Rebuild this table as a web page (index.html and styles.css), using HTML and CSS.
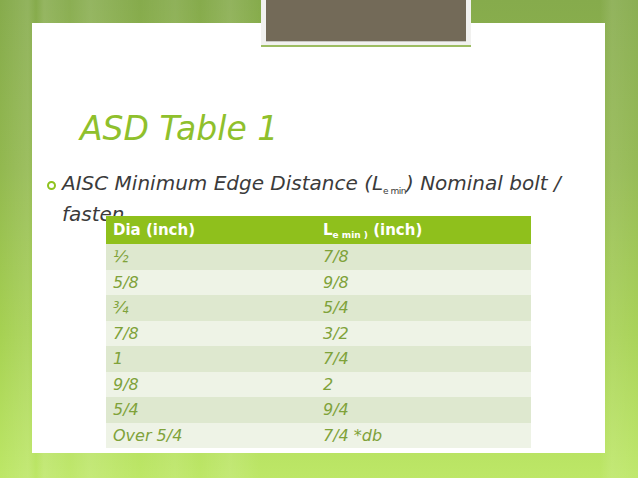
FILE: index.html
```html
<!DOCTYPE html>
<html>
<head>
<meta charset="utf-8">
<link rel="stylesheet" href="styles.css">
</head>
<body>
<div class="slide">
  <div class="photo-frame"><div class="photo"></div></div>
  <div class="panel">
    <h1 class="title">ASD Table 1</h1>
    <div class="bullet">
      <span class="dot"></span>
      <p class="bullet-text">AISC Minimum Edge Distance (L<sub class="sub">e min</sub>) Nominal bolt / fasten</p>
    </div>
    <table class="tbl">
      <thead>
        <tr><th class="c1">Dia (inch)</th><th class="c2">L<sub class="hsub">e min )</sub> (inch)</th></tr>
      </thead>
      <tbody>
        <tr><td>½</td><td>7/8</td></tr>
        <tr><td>5/8</td><td>9/8</td></tr>
        <tr><td>¾</td><td>5/4</td></tr>
        <tr><td>7/8</td><td>3/2</td></tr>
        <tr><td>1</td><td>7/4</td></tr>
        <tr><td>9/8</td><td>2</td></tr>
        <tr><td>5/4</td><td>9/4</td></tr>
        <tr><td>Over 5/4</td><td>7/4 *db</td></tr>
      </tbody>
    </table>
  </div>
</div>
</body>
</html>
```
FILE: styles.css
```css
html, body {
  margin: 0;
  padding: 0;
}
body {
  width: 638px;
  height: 478px;
  overflow: hidden;
}
.slide {
  position: relative;
  width: 638px;
  height: 478px;
  box-sizing: border-box;
  padding: 23px 33px 25px 32px;
  background:
    linear-gradient(90deg,
      rgba(255,255,255,0) 0px, rgba(255,255,255,0.10) 28px, rgba(255,255,255,0.0) 36px,
      rgba(255,255,255,0.12) 44px, rgba(255,255,255,0.04) 70px, rgba(255,255,255,0.12) 90px,
      rgba(255,255,255,0) 140px, rgba(255,255,255,0.08) 175px, rgba(255,255,255,0) 200px,
      rgba(255,255,255,0.10) 230px, rgba(255,255,255,0) 260px,
      rgba(255,255,255,0) 600px, rgba(255,255,255,0.10) 612px, rgba(255,255,255,0.04) 638px),
    linear-gradient(180deg, #86ab4c 0%, #92b84f 35%, #a6d152 70%, #bde767 100%);
}
.photo-frame {
  position: absolute;
  left: 261px;
  top: 0;
  width: 210px;
  height: 45px;
  background: #f1f1ef;
  border-bottom: 2px solid #9dbd62;
  box-sizing: content-box;
}
.photo {
  margin: 0 5px;
  height: 41px;
  background: #736a58;
  border-bottom: 1px solid #c9c7c2;
}
.panel {
  height: 430px;
  background: #ffffff;
  box-sizing: border-box;
  padding-top: 1px;
}
.title {
  margin: 85px 0 0 48px;
  font-family: "DejaVu Sans", sans-serif;
  font-style: italic;
  font-weight: normal;
  font-size: 33px;
  line-height: 40px;
  color: #8fc02c;
}
.bullet {
  display: flex;
  align-items: flex-start;
  margin: 19px 0 0 15px;
}
.dot {
  flex: none;
  width: 5px;
  height: 5px;
  border: 2px solid #8fc31f;
  border-radius: 50%;
  margin: 13px 6px 0 0;
}
.bullet-text {
  margin: 0;
  width: 532px;
  font-family: "DejaVu Sans", sans-serif;
  font-style: italic;
  font-size: 20px;
  line-height: 31px;
  color: #3b3b3b;
}
.sub {
  font-size: 9px;
  font-style: normal;
  vertical-align: -4px;
  line-height: 0;
  letter-spacing: -0.5px;
}
.tbl {
  margin: -14px 0 0 74px;
  width: 425px;
  border-collapse: collapse;
  position: relative;
  font-family: "DejaVu Sans", sans-serif;
}
.tbl th {
  background: #8fc01c;
  color: #ffffff;
  text-align: left;
  font-weight: bold;
  font-size: 15px;
  height: 28px;
  padding: 0 0 0 7px;
}
.tbl .c1 { width: 203px; }
.hsub {
  font-size: 9px;
  vertical-align: -3px;
  line-height: 0;
}
.tbl td {
  height: 25.5px;
  padding: 0 0 0 7px;
  font-style: italic;
  font-size: 16px;
  color: #7fa23a;
}
.tbl tbody tr:nth-child(odd) td { background: #dee8cf; }
.tbl tbody tr:nth-child(even) td { background: #eef3e6; }
```
